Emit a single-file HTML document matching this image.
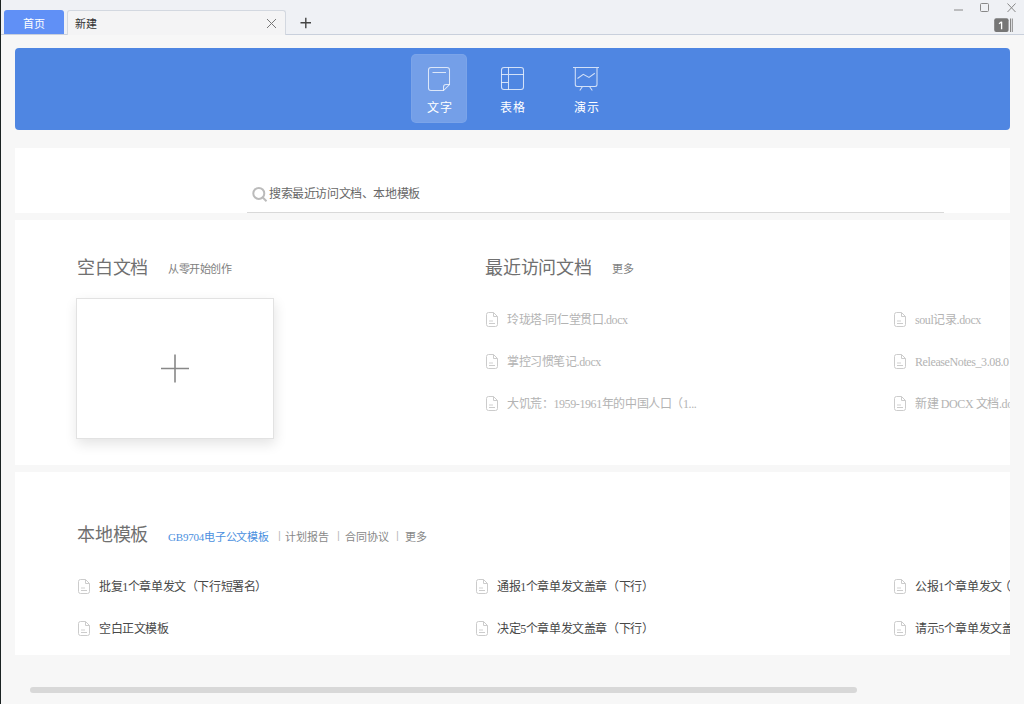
<!DOCTYPE html>
<html lang="zh-CN"><head><meta charset="utf-8">
<style>
*{margin:0;padding:0;box-sizing:border-box}
html,body{width:1024px;height:704px;overflow:hidden}
body{position:relative;background:#f7f7f7;font-family:"Liberation Sans",sans-serif;color:#333}
.abs{position:absolute}
#leftline{left:0;top:0;width:1px;height:704px;background:#1b2222}
#topbar{left:1px;top:0;width:1023px;height:35px;background:#eff1f5;border-bottom:1px solid #c9d0dc}
#tab1{left:4px;top:10px;width:60px;height:24px;background:#6090f6;border-radius:3px 3px 0 0;color:#fff;font-size:11px;line-height:16px;padding-top:6px;text-align:center}
#tab2{left:67px;top:9.5px;width:218.5px;height:25.5px;background:#f4f4f5;border:1px solid #d3d8e0;border-bottom:none;border-radius:3px 3px 0 0;font-size:11px;line-height:16px;padding-top:5px;padding-left:7px;color:#333}
.txt{white-space:nowrap}
#banner{left:15px;top:48px;width:995px;height:82px;background:#4f86e2;border-radius:4px}
#active{left:411px;top:54px;width:56px;height:69px;background:rgba(255,255,255,0.21);border:1px solid rgba(255,255,255,0.06);border-radius:5px}
.blab{color:#fff;font-size:12px;text-align:center;width:40px;letter-spacing:1px;text-indent:1px}
.panel{left:15px;width:995px;background:#fff}
.ttl{font-family:"Liberation Serif",serif;font-size:18px;letter-spacing:-0.25px;color:#707070}
.sub{font-size:11px;letter-spacing:-0.4px;color:#808080}
.rec{font-family:"Liberation Serif",serif;font-size:12px;line-height:18px;letter-spacing:-0.4px;color:#b3b3b3}
.tpl{font-family:"Liberation Serif",serif;font-size:12px;line-height:18px;letter-spacing:-0.4px;color:#484848}
#card{left:76px;top:298px;width:198px;height:141px;background:#fff;border:1px solid #e2e2e2;box-shadow:1px 5px 12px rgba(0,0,0,0.11)}
#scroll{left:30px;top:687px;width:827px;height:6px;background:#d8d8d8;border-radius:3px}
</style></head><body>
<div id="leftline" class="abs"></div>
<div id="topbar" class="abs"></div>
<div id="tab1" class="abs">首页</div>
<div id="tab2" class="abs">新建</div>
<svg class="abs" style="left:266px;top:18px" width="11" height="11" viewBox="0 0 11 11"><path d="M1 1L10 10M10 1L1 10" stroke="#777" stroke-width="1"/></svg>
<svg class="abs" style="left:300px;top:17px" width="12" height="12" viewBox="0 0 12 12"><path d="M5.8 0.7V11.2M0.5 5.8H11" stroke="#444" stroke-width="1.4"/></svg>
<!-- window controls -->
<svg class="abs" style="left:950px;top:0px" width="74" height="36" viewBox="0 0 74 36">
 <path d="M4 10H13" stroke="#888" stroke-width="1"/>
 <rect x="30.5" y="3.5" width="8" height="8" rx="1" fill="none" stroke="#888" stroke-width="1"/>
 <path d="M57.5 3.5L65.5 12M65.5 3.5L57.5 12" stroke="#888" stroke-width="1"/>
 <rect x="44.2" y="18.3" width="14.4" height="13.6" rx="2" fill="#767676"/>
 <path d="M51.6 29.2V21.8M51.6 21.8L49 23.8" stroke="#fff" stroke-width="1.3" fill="none"/>
 <path d="M60.5 18.5V32M62.3 18.5V32" stroke="#7a7a7a" stroke-width="0.9"/>
</svg>

<div id="banner" class="abs"></div>
<div id="active" class="abs"></div>
<svg class="abs" style="left:405px;top:60px" width="200" height="36" viewBox="405 60 200 36" fill="none" stroke="rgba(255,255,255,0.75)" stroke-width="1.05">
 <path d="M449.5 84.5V70a2.5 2.5 0 0 0-2.5-2.5H431a2.5 2.5 0 0 0-2.5 2.5V88a2.5 2.5 0 0 0 2.5 2.5H443.5Z"/>
 <path d="M449.5 84.5H446a2.5 2.5 0 0 0-2.5 2.5V90.5"/>
 <path d="M432.5 72.5H446"/>
 <rect x="501.5" y="67.5" width="22" height="22" rx="2.5"/>
 <path d="M508.5 67.5V89.5M501.5 74.5H523.5M501.5 82.5H508.5"/>
 <path d="M573 67.5H599M575.3 67.5V84.5a2 2 0 0 0 2 2H595a2 2 0 0 0 2-2V67.5M582.5 86.5L579.8 90.5M589.5 86.5L592.3 90.5M577.5 78.5L583.3 74.3L589 77.4L594.8 73.3"/>
</svg>
<div class="abs blab txt" style="left:419px;top:98px">文字</div>
<div class="abs blab txt" style="left:492px;top:98px">表格</div>
<div class="abs blab txt" style="left:566px;top:98px">演示</div>

<div class="abs panel" style="top:148px;height:65px"></div>
<div class="abs" style="left:247px;top:212px;width:697px;height:1px;background:#d9d9d9"></div>
<svg class="abs" style="left:251px;top:186px" width="18" height="18" viewBox="0 0 18 18" fill="none" stroke="#bbb" stroke-width="2"><circle cx="7.8" cy="7.4" r="5.5"/><path d="M11.5 11.3L15.5 15.3"/></svg>
<div class="abs txt" style="left:269px;top:184px;font-size:12px;letter-spacing:-0.4px;color:#686868">搜索最近访问文档、本地模板</div>

<div class="abs panel" style="top:220px;height:245px"></div>
<div class="abs ttl txt" style="left:77px;top:253px">空白文档</div>
<div class="abs sub txt" style="left:168px;top:260px">从零开始创作</div>
<div id="card" class="abs"></div>
<svg class="abs" style="left:160px;top:354px" width="30" height="30" viewBox="0 0 30 30"><path d="M15 0.5V28.5M1 14.5H29" stroke="#888" stroke-width="1.6"/></svg>

<div class="abs ttl txt" style="left:485px;top:253px">最近访问文档</div>
<div class="abs sub txt" style="left:612px;top:260px">更多</div>

<div class="abs panel" style="top:472px;height:183px"></div>
<div class="abs ttl txt" style="left:77px;top:520px">本地模板</div>
<svg class="abs" style="left:486px;top:312px" width="13" height="15" viewBox="0 0 13 15" fill="none" stroke="#ccc" stroke-width="1"><path d="M0.5 2.5a2 2 0 0 1 2-2H7.5L11.5 4.5V12.5a2 2 0 0 1-2 2H2.5a2 2 0 0 1-2-2Z"/><path d="M7.5 0.5V4.5H11.5"/><path d="M3 9H7" stroke-width="0.9"/><path d="M3 11.5H9"/></svg>
<div class="abs rec txt" style="left:507px;top:311px">玲珑塔-同仁堂贯口.docx</div>
<svg class="abs" style="left:486px;top:354px" width="13" height="15" viewBox="0 0 13 15" fill="none" stroke="#ccc" stroke-width="1"><path d="M0.5 2.5a2 2 0 0 1 2-2H7.5L11.5 4.5V12.5a2 2 0 0 1-2 2H2.5a2 2 0 0 1-2-2Z"/><path d="M7.5 0.5V4.5H11.5"/><path d="M3 9H7" stroke-width="0.9"/><path d="M3 11.5H9"/></svg>
<div class="abs rec txt" style="left:507px;top:353px">掌控习惯笔记.docx</div>
<svg class="abs" style="left:486px;top:396px" width="13" height="15" viewBox="0 0 13 15" fill="none" stroke="#ccc" stroke-width="1"><path d="M0.5 2.5a2 2 0 0 1 2-2H7.5L11.5 4.5V12.5a2 2 0 0 1-2 2H2.5a2 2 0 0 1-2-2Z"/><path d="M7.5 0.5V4.5H11.5"/><path d="M3 9H7" stroke-width="0.9"/><path d="M3 11.5H9"/></svg>
<div class="abs rec txt" style="left:507px;top:395px">大饥荒：1959-1961年的中国人口（1...</div>
<svg class="abs" style="left:894px;top:312px" width="13" height="15" viewBox="0 0 13 15" fill="none" stroke="#ccc" stroke-width="1"><path d="M0.5 2.5a2 2 0 0 1 2-2H7.5L11.5 4.5V12.5a2 2 0 0 1-2 2H2.5a2 2 0 0 1-2-2Z"/><path d="M7.5 0.5V4.5H11.5"/><path d="M3 9H7" stroke-width="0.9"/><path d="M3 11.5H9"/></svg>
<div class="abs rec txt" style="left:915px;top:311px">soul记录.docx</div>
<svg class="abs" style="left:894px;top:354px" width="13" height="15" viewBox="0 0 13 15" fill="none" stroke="#ccc" stroke-width="1"><path d="M0.5 2.5a2 2 0 0 1 2-2H7.5L11.5 4.5V12.5a2 2 0 0 1-2 2H2.5a2 2 0 0 1-2-2Z"/><path d="M7.5 0.5V4.5H11.5"/><path d="M3 9H7" stroke-width="0.9"/><path d="M3 11.5H9"/></svg>
<div class="abs rec txt" style="left:915px;top:353px">ReleaseNotes_3.08.0</div>
<svg class="abs" style="left:894px;top:396px" width="13" height="15" viewBox="0 0 13 15" fill="none" stroke="#ccc" stroke-width="1"><path d="M0.5 2.5a2 2 0 0 1 2-2H7.5L11.5 4.5V12.5a2 2 0 0 1-2 2H2.5a2 2 0 0 1-2-2Z"/><path d="M7.5 0.5V4.5H11.5"/><path d="M3 9H7" stroke-width="0.9"/><path d="M3 11.5H9"/></svg>
<div class="abs rec txt" style="left:915px;top:395px">新建 DOCX 文档.docx</div>
<svg class="abs" style="left:78px;top:579px" width="13" height="15" viewBox="0 0 13 15" fill="none" stroke="#ccc" stroke-width="1"><path d="M0.5 2.5a2 2 0 0 1 2-2H7.5L11.5 4.5V12.5a2 2 0 0 1-2 2H2.5a2 2 0 0 1-2-2Z"/><path d="M7.5 0.5V4.5H11.5"/><path d="M3 9H7" stroke-width="0.9"/><path d="M3 11.5H9"/></svg>
<div class="abs tpl txt" style="left:99px;top:578px">批复1个章单发文（下行短署名）</div>
<svg class="abs" style="left:78px;top:621px" width="13" height="15" viewBox="0 0 13 15" fill="none" stroke="#ccc" stroke-width="1"><path d="M0.5 2.5a2 2 0 0 1 2-2H7.5L11.5 4.5V12.5a2 2 0 0 1-2 2H2.5a2 2 0 0 1-2-2Z"/><path d="M7.5 0.5V4.5H11.5"/><path d="M3 9H7" stroke-width="0.9"/><path d="M3 11.5H9"/></svg>
<div class="abs tpl txt" style="left:99px;top:620px">空白正文模板</div>
<svg class="abs" style="left:476px;top:579px" width="13" height="15" viewBox="0 0 13 15" fill="none" stroke="#ccc" stroke-width="1"><path d="M0.5 2.5a2 2 0 0 1 2-2H7.5L11.5 4.5V12.5a2 2 0 0 1-2 2H2.5a2 2 0 0 1-2-2Z"/><path d="M7.5 0.5V4.5H11.5"/><path d="M3 9H7" stroke-width="0.9"/><path d="M3 11.5H9"/></svg>
<div class="abs tpl txt" style="left:497px;top:578px">通报1个章单发文盖章（下行）</div>
<svg class="abs" style="left:476px;top:621px" width="13" height="15" viewBox="0 0 13 15" fill="none" stroke="#ccc" stroke-width="1"><path d="M0.5 2.5a2 2 0 0 1 2-2H7.5L11.5 4.5V12.5a2 2 0 0 1-2 2H2.5a2 2 0 0 1-2-2Z"/><path d="M7.5 0.5V4.5H11.5"/><path d="M3 9H7" stroke-width="0.9"/><path d="M3 11.5H9"/></svg>
<div class="abs tpl txt" style="left:497px;top:620px">决定5个章单发文盖章（下行）</div>
<svg class="abs" style="left:894px;top:579px" width="13" height="15" viewBox="0 0 13 15" fill="none" stroke="#ccc" stroke-width="1"><path d="M0.5 2.5a2 2 0 0 1 2-2H7.5L11.5 4.5V12.5a2 2 0 0 1-2 2H2.5a2 2 0 0 1-2-2Z"/><path d="M7.5 0.5V4.5H11.5"/><path d="M3 9H7" stroke-width="0.9"/><path d="M3 11.5H9"/></svg>
<div class="abs tpl txt" style="left:915px;top:578px">公报1个章单发文<span style="margin-left:-3px">（</span>下行）</div>
<svg class="abs" style="left:894px;top:621px" width="13" height="15" viewBox="0 0 13 15" fill="none" stroke="#ccc" stroke-width="1"><path d="M0.5 2.5a2 2 0 0 1 2-2H7.5L11.5 4.5V12.5a2 2 0 0 1-2 2H2.5a2 2 0 0 1-2-2Z"/><path d="M7.5 0.5V4.5H11.5"/><path d="M3 9H7" stroke-width="0.9"/><path d="M3 11.5H9"/></svg>
<div class="abs tpl txt" style="left:915px;top:620px">请示5个章单发文盖章（上行）</div>
<div class="abs txt" style="left:168px;top:528px;font-family:'Liberation Serif',serif;font-size:11px;letter-spacing:-0.2px;color:#4a8fe0">GB9704电子公文模板</div>
<div class="abs txt" style="left:278px;top:529px;font-size:11px;color:#bbb">|</div>
<div class="abs txt" style="left:285px;top:528px;font-size:11px;color:#888">计划报告</div>
<div class="abs txt" style="left:337px;top:529px;font-size:11px;color:#bbb">|</div>
<div class="abs txt" style="left:345px;top:528px;font-size:11px;color:#888">合同协议</div>
<div class="abs txt" style="left:396px;top:529px;font-size:11px;color:#bbb">|</div>
<div class="abs txt" style="left:405px;top:528px;font-size:11px;color:#888">更多</div>
<div class="abs" style="left:1010px;top:140px;width:14px;height:540px;background:#f7f7f7"></div>
<div id="scroll" class="abs"></div>
</body></html>
